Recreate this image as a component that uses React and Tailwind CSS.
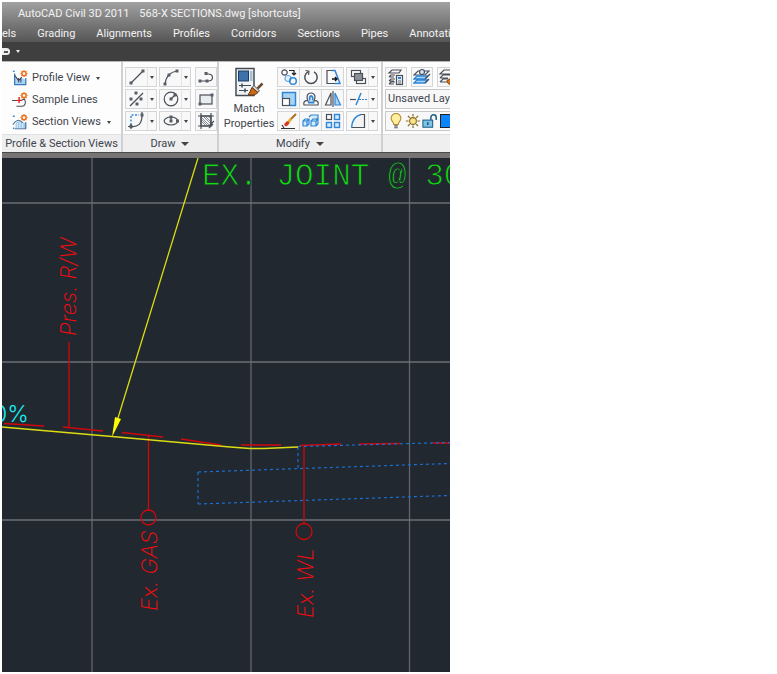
import React from "react";

const INK = "#4a4f58";
const BLUE = "#2f86d6";
const SKY = "#a9d3f2";

function Glyph({ children, size = "size-[18px]", box = 18 }) {
  return (
    <svg
      className={`${size} shrink-0`}
      viewBox={`0 0 ${box} ${box}`}
      fill="none"
      stroke={INK}
      strokeWidth="1.2"
      aria-hidden="true"
    >
      {children}
    </svg>
  );
}

function Node({ x, y }) {
  return <rect x={x - 1} y={y - 1} width="2" height="2" fill="#7b818b" stroke={INK} strokeWidth="0.9" />;
}

function Gear() {
  return (
    <g stroke="#f0701a">
      <circle cx="13.500" cy="4" r="2.400" fill="#fff" strokeWidth="1.700" />
      <path d="M13.500 0v1.200M13.500 6.800v1.200M9.500 4h1.200M16.300 4h1.200M10.700 1.200l.9.900M15.400 5.900l.9.900M16.300 1.200l-.9.900M11.600 5.900l-.9.900" strokeWidth="1.200" />
    </g>
  );
}

const icons = {
  profile: (
    <>
      <path d="M3.500 16V7l4 5 2.500-4 5 3v5z" fill="#a9d3f4" stroke="none" />
      <path d="M3 4v12.500h12.500V9" stroke="#3479bd" strokeWidth="1.400" />
      <path d="M3 6l4.500 6L11 8M7.500 9v5M10 10v4" stroke="#3c4654" />
      <path d="M1 1.500h2" stroke={BLUE} strokeWidth="1.600" />
      <Gear />
    </>
  ),
  sample: (
    <>
      <path d="M0 9.500h9c2 0 4-1 5-2M14 8c2 4 1 8-3 8H5" />
      <path d="M8 5.500v7" stroke="#e02020" strokeWidth="1.600" />
      <path d="M5 9.500h6" stroke="#e02020" />
      <Gear />
    </>
  ),
  section: (
    <>
      <path d="M4 16v-5c2-3 6-4 8-2l4 2v5z" fill="#9cc9ef" stroke="none" />
      <path d="M1 12c3-5 7-7 11-2M3 16.500h13M15.500 9v7" stroke="#4b6f95" />
      <path d="M6 10v6M9 9v7M12 10v6" stroke="#e3f1fb" />
      <path d="M1 2.500h2M1 16h1.500" stroke={BLUE} strokeWidth="1.600" />
      <Gear />
    </>
  ),
  line: (
    <>
      <path d="M3 15L15 3" />
      <Node x={3} y={15} />
      <Node x={15} y={3} />
    </>
  ),
  points: (
    <>
      <path d="M2 16L15 3" />
      <Node x={3} y={9} />
      <Node x={8} y={3} />
      <Node x={13} y={9} />
      <Node x={9} y={14} />
    </>
  ),
  fillet: (
    <>
      <path d="M3 13V3h8" stroke={BLUE} strokeDasharray="2 1.500" strokeWidth="1.400" />
      <path d="M3 14.500c7 1 11-3 11-11M0 14.500h6M14 0v6M3 12v5" />
      <Node x={3} y={14.5} />
      <Node x={14} y={3} />
    </>
  ),
  arc: (
    <>
      <path d="M3 16C4 8 8 4 15 3" />
      <Node x={3} y={16} />
      <Node x={7} y={7} />
      <Node x={15} y={3} />
    </>
  ),
  circle: (
    <>
      <circle cx="9" cy="9" r="6.800" />
      <path d="M9 9l4-4" />
      <Node x={9} y={9} />
      <Node x={13} y={5} />
    </>
  ),
  ellipse: (
    <>
      <ellipse cx="9" cy="9" rx="6.800" ry="4" />
      <path d="M9 5v4" />
      <Node x={9} y={9} />
      <Node x={9} y={5} />
      <Node x={15.5} y={9} />
    </>
  ),
  polyline: (
    <>
      <path d="M3 13h8c6 0 6-7 0-7H9" />
      <Node x={3} y={13} />
      <Node x={10} y={13} />
      <Node x={9} y={5.5} />
    </>
  ),
  rectangle: (
    <>
      <rect x="3" y="5" width="12" height="9" fill="#e9ecef" />
      <Node x={3} y={14} />
      <Node x={15} y={5} />
    </>
  ),
  hatch: (
    <>
      <rect x="4" y="4" width="10" height="10" fill="#eef0f2" />
      <path d="M4 5l9 9M4 9l5 5M8 4l6 6M11 4l3 3M4 7l7 7M6 4l8 8" strokeWidth=".6" />
      <path d="M4 1v16M14 1v12M1 4h16M1 14h11l5-5M12 16l4-4" />
    </>
  ),
  copy: (
    <>
      <circle cx="4.500" cy="4.500" r="2.700" />
      <circle cx="8" cy="10.500" r="3" stroke="#6aa9e0" fill="#e4f1fb" />
      <circle cx="13" cy="13" r="3.300" stroke={BLUE} strokeWidth="1.500" />
      <path d="M9 2.500h5v4M12 5l2 2 2-2" stroke="#222" />
    </>
  ),
  rotate: (
    <>
      <path d="M6 3.800A6.200 6.200 0 1 0 12 3.800" strokeWidth="1.500" />
      <path d="M3.500 2.500l3.500.7-.5 3.600" />
    </>
  ),
  stretch: (
    <>
      <path d="M9 2.500H3v13h8" />
      <path d="M8 2.500h3l5 13h-5" stroke={BLUE} strokeWidth="1.500" />
      <path d="M8 11h5M11 9l2 2-2 2" stroke="#111" strokeWidth="1.400" />
    </>
  ),
  scale: (
    <>
      <path d="M2.500 8V2.500h13v13H10" fill={SKY} stroke={BLUE} strokeWidth="1.500" />
      <rect x="2.500" y="8.500" width="7" height="7" fill="#fff" />
    </>
  ),
  offset: (
    <>
      <path d="M2 15h14c1-3-1-5-4-4 2-4 1-8-3-8s-5 4-3 8c-3-1-5 1-4 4z" />
      <path d="M6 12.500h6.500M8 10.500c-2-6 4-6 2.500 0" stroke={BLUE} strokeWidth="1.800" />
    </>
  ),
  mirror: (
    <>
      <path d="M7 3v12H1.500z" />
      <path d="M9 1v16" />
      <path d="M11 3v12h5.500z" fill={SKY} stroke={BLUE} />
    </>
  ),
  erase: (
    <>
      <path d="M16 2l-6 6" stroke="#b06a22" strokeWidth="2" />
      <path d="M11 7l-3 3.500" stroke="#e7b23a" strokeWidth="3" />
      <path d="M7.500 11L6 12.500" stroke="#d9371f" strokeWidth="3.500" strokeLinecap="round" />
      <path d="M1 16.500h14M2 13l2 3" stroke="#333" />
    </>
  ),
  explode: (
    <g stroke={BLUE} fill="#d5eafa">
      <path d="M1 9l2-2h4v5l-2 2H1zM1 9h4v5M5 9l2-2" />
      <path d="M7 5l2-2h7v3l-2 2M9 9l2-2h5v5l-2 2H9zM9 9h5v5M14 9l2-2" />
    </g>
  ),
  array: (
    <>
      <rect x="2.500" y="2.500" width="5" height="5" />
      <g stroke={BLUE} fill="#d5eafa" strokeWidth="1.400">
        <rect x="10.500" y="2.500" width="5" height="5" />
        <rect x="2.500" y="10.500" width="5" height="5" />
        <rect x="10.500" y="10.500" width="5" height="5" />
      </g>
    </>
  ),
  order: (
    <>
      <rect x="2.500" y="2.500" width="9" height="6" fill="#fff" />
      <rect x="7.500" y="10.500" width="9" height="5" fill="#fff" />
      <rect x="5.500" y="5.500" width="8" height="7" fill="#8b9098" />
    </>
  ),
  trim: (
    <>
      <path d="M7 15l5-12" stroke={BLUE} strokeWidth="1.500" />
      <path d="M1 9.500h6" />
      <path d="M10 9.500h8" strokeDasharray="2 1" stroke={BLUE} />
    </>
  ),
  chamfer: (
    <>
      <path d="M2.500 15.500h13v-13H11" fill="#f1f3f5" />
      <path d="M2.500 15.500C3 8 6 4 12 2.500" stroke={BLUE} strokeWidth="1.500" />
    </>
  ),
  layerProps: (
    <>
      <path d="M2 5l3-3h9l-2 3zM2 9l2-2h4M2 13l2-2h4M2 16l2-2h4M2 9h5M2 13h5M2 16h5" />
      <rect x="9.500" y="7.500" width="6" height="9" fill="#e8f1fa" />
      <path d="M11 10h3" stroke={BLUE} strokeWidth="2" />
      <path d="M11 13h3M11 15h3" strokeWidth=".8" />
    </>
  ),
  layerCurrent: (
    <>
      <path d="M1 7l4-4h11l-4 4z" fill="#fff" />
      <path d="M1 11l3-3h11l-3 3zM1 15l3-3h11l-3 3z" fill={SKY} stroke={BLUE} strokeWidth="1.300" />
      <circle cx="9" cy="4" r="2.500" fill="#cfe5f8" />
      <path d="M12 11l5-5M12 15l4-4" />
    </>
  ),
  layerMatch: (
    <>
      <path d="M1 6l4-4h11l-4 4zM1 10l3-3h11M1 14l3-3h5M1 10h8M1 14h7" />
      <path d="M8 13l4-3 4 3-3 3c-2 1-4 0-5-3z" fill="#d9791f" stroke="#a1520e" />
    </>
  ),
};

function Caret({ tone = "border-t-[#444]", wide = false }) {
  return (
    <span
      aria-hidden="true"
      className={`block border-x-transparent ${tone} ${wide ? "border-x-4 border-t-4" : "border-x-2 border-t-3"}`}
    />
  );
}

function ToolButton({ icon, label, width = "w-[22px]" }) {
  return (
    <button
      type="button"
      aria-label={label}
      className={`flex h-5 shrink-0 items-center justify-center border border-[#d3d5d7] bg-[#f8f8f9] ${width}`}
    >
      <Glyph>{icons[icon]}</Glyph>
    </button>
  );
}

function SplitButton({ icon, label }) {
  return (
    <div className="flex h-5 w-8 shrink-0 border border-[#d3d5d7] bg-[#f8f8f9]">
      <button type="button" aria-label={label} className="flex w-[21px] items-center justify-center">
        <Glyph>{icons[icon]}</Glyph>
      </button>
      <button type="button" aria-label={`${label} options`} className="flex flex-1 items-center justify-center border-l border-[#e2e3e5]">
        <Caret />
      </button>
    </div>
  );
}

function Panel({ title, caret, className, children }) {
  return (
    <section className={`flex flex-col border-r-2 border-[#cfd0d2] bg-[#fdfdfd] ${className}`}>
      <div className="flex h-[72px] items-start pt-[5px]">{children}</div>
      <h2 className="flex h-[18px] items-center justify-center gap-1.5 border-t border-[#e0e1e3] bg-[#efeff0] whitespace-nowrap">
        {title}
        {caret && <Caret wide />}
      </h2>
    </section>
  );
}

const tabs = ["els", "Grading", "Alignments", "Profiles", "Corridors", "Sections", "Pipes", "Annotation"];

const viewTools = [
  { icon: "profile", label: "Profile View", menu: true },
  { icon: "sample", label: "Sample Lines", menu: false },
  { icon: "section", label: "Section Views", menu: true },
];

const drawRows = [
  [["line", "Line"], ["arc", "Arc"], ["polyline", "Polyline"]],
  [["points", "Points"], ["circle", "Circle"], ["rectangle", "Rectangle"]],
  [["fillet", "Curve"], ["ellipse", "Ellipse"], ["hatch", "Hatch"]],
];

const modifyRows = [
  [["copy", "Copy"], ["rotate", "Rotate"], ["stretch", "Stretch"], ["order", "Draw order"]],
  [["scale", "Scale"], ["offset", "Offset"], ["mirror", "Mirror"], ["trim", "Trim"]],
  [["erase", "Erase"], ["explode", "Explode"], ["array", "Array"], ["chamfer", "Fillet"]],
];

function MatchIcon() {
  return (
    <svg className="h-[30px] w-[30px]" viewBox="0 0 30 30" fill="none" aria-hidden="true">
      <rect x="2" y="1.500" width="18" height="27" fill="#f0f3f6" stroke="#444b55" strokeWidth="1.500" />
      <rect x="4.500" y="4" width="10" height="10" fill="#3d72aa" stroke="#1c3d62" />
      <path d="M16 4h2.500v10H16z" fill="#a9bdd1" />
      <path d="M5 18.500h12M5 23.500h9" stroke="#444b55" strokeWidth="1.200" />
      <path d="M8 16.500v4M11 21.500v4" stroke="#444b55" strokeWidth="1.500" />
      <path d="M28.500 16.500l-5 5" stroke="#6e4a2c" strokeWidth="2.500" />
      <path d="M20 18.500l5.500 5.500-2 1.500-5.500-5z" fill="#d5d9dd" stroke="#555" />
      <path d="M18 20.500l6 5c-3 3-6 3-10 2 2-1 2-4 4-7z" fill="#c8681b" stroke="#6c3305" />
    </svg>
  );
}

function Ribbon() {
  return (
    <div className="flex shrink-0 overflow-hidden border-t border-[#b8b8b8] bg-white text-[11px] leading-4 text-[#3f454e]">
      <Panel title="Profile & Section Views" className="w-[121px] shrink-0">
        <ul className="flex flex-col gap-1.5 pt-[3px] pl-2.5">
          {viewTools.map((tool) => (
            <li key={tool.icon}>
              <button type="button" className="flex h-4 items-center gap-1 whitespace-nowrap">
                <Glyph size="size-4">{icons[tool.icon]}</Glyph>
                <span className="pr-0.5">{tool.label}</span>
                {tool.menu && <Caret />}
              </button>
            </li>
          ))}
        </ul>
      </Panel>

      <Panel title="Draw" caret className="w-24 shrink-0">
        <div className="flex flex-col gap-0.5 pl-0.5">
          {drawRows.map(([a, b, c]) => (
            <div key={a[0]} className="flex">
              <SplitButton icon={a[0]} label={a[1]} />
              <span className="w-0.5" />
              <SplitButton icon={b[0]} label={b[1]} />
              <span className="w-1" />
              <ToolButton icon={c[0]} label={c[1]} />
            </div>
          ))}
        </div>
      </Panel>

      <Panel title="Modify" caret className="w-[164px] shrink-0">
        <button type="button" className="flex w-[58px] shrink-0 flex-col items-center pl-0.5 text-center leading-[15px]">
          <MatchIcon />
          <span className="pt-1">
            Match
            <br />
            Properties
          </span>
        </button>
        <div className="flex flex-col gap-0.5">
          {modifyRows.map(([a, b, c, d]) => (
            <div key={a[0]} className="flex">
              <div className="flex -space-x-px">
                <ToolButton icon={a[0]} label={a[1]} width="w-[23px]" />
                <ToolButton icon={b[0]} label={b[1]} width="w-[23px]" />
                <ToolButton icon={c[0]} label={c[1]} width="w-[23px]" />
              </div>
              <span className="w-0.5" />
              <SplitButton icon={d[0]} label={d[1]} />
            </div>
          ))}
        </div>
      </Panel>

      <Panel title="" className="min-w-[200px] flex-1">
        <div className="flex w-full flex-col gap-0.5 pl-0.5">
          <div className="flex gap-1">
            <ToolButton icon="layerProps" label="Layer properties" />
            <ToolButton icon="layerCurrent" label="Make current" />
            <ToolButton icon="layerMatch" label="Match layer" />
          </div>
          <select aria-label="Layer state" className="h-5 w-40 appearance-none border border-[#c6c8ca] bg-[#f8f8f9] px-0.5">
            <option>Unsaved Layer State</option>
          </select>
          <button type="button" aria-label="Current layer" className="flex h-5 w-40 items-center gap-px border border-[#c6c8ca] bg-[#f8f8f9] pl-0.5">
            <Glyph size="size-4">
              <path d="M6.500 13c0-3-3-3.500-3-7a5.500 5.500 0 0 1 11 0c0 3.500-3 4-3 7z" fill="#fdeea0" stroke="#b28a2c" />
              <path d="M7 14.500h4M7 16.500h4" stroke="#555" />
            </Glyph>
            <Glyph size="size-4">
              <circle cx="9" cy="9" r="3.800" fill="#fbe389" stroke="#8b6c22" />
              <path d="M9 1v3M9 14v3M1 9h3M14 9h3M3.300 3.300l2 2M12.700 12.700l2 2M14.700 3.300l-2 2M5.300 12.700l-2 2" stroke="#8b6c22" strokeWidth="1.400" />
            </Glyph>
            <Glyph size="size-4">
              <rect x="1" y="8" width="11" height="8" fill="#7cc3e8" stroke="#1e5f86" />
              <path d="M10 8V5c0-4 6-4 6 0v3" stroke="#1e5f86" strokeWidth="1.700" />
              <path d="M6.500 10.500v3" stroke="#1e3f56" strokeWidth="1.500" />
            </Glyph>
            <span className="ml-px size-3.5 border border-[#222] bg-[#0a84ff]" />
          </button>
        </div>
      </Panel>
    </div>
  );
}

const redDashes = "M2 265.500L42 268M61 269L101 273M120 274.500L161 279M179 281L219 287M239 287H279M298 287.500L339 286M357 286L398 285.500M431 285H900";

function Drawing() {
  return (
    <div className="min-h-0 flex-1 overflow-hidden bg-[#212830]">
      <svg className="h-full w-full" fill="none" role="img" aria-label="Cross section drawing">
        <g stroke="#62666b" strokeWidth="1.300">
          <path d="M90 0V2000M249 0V2000M407.500 0V2000" />
          <path d="M0 45H2000M0 204H2000M0 362H2000" stroke="#6c6f73" />
        </g>
        <g stroke="#d0080c" strokeWidth="1.300">
          <path d={redDashes} />
          <path d="M67 184V269M146.500 277V352M302 288V365.500" />
          <circle cx="146.500" cy="359.500" r="7.500" />
          <circle cx="302" cy="373.500" r="8" />
        </g>
        <g stroke="#1b6fd0" strokeWidth="1.200" strokeDasharray="3 3">
          <path d="M296 288.500L448 284.500M196 314L448 305.500M196 346L448 337.500" />
          <path d="M196 314V346M296 289V311" />
        </g>
        <path d="M196 0L116 260M0 269L110 278.500L228 289L248 290.500H262L296 289" stroke="#dcdc12" strokeWidth="1.300" />
        <path d="M113 259L119 261L110 279z" fill="#ffff00" />

        <text
          x="200"
          y="27"
          className="font-['Liberation_Mono',monospace] text-[31px] whitespace-pre"
          fill="#10dc10"
          stroke="#212830"
          strokeWidth="0.900"
        >
          EX. JOINT @ 30
        </text>
        <g fill="#ff080c" className="font-['Inter',sans-serif] text-[22px] font-extralight whitespace-pre italic">
          <text transform="translate(74 178) rotate(-90)">{"Pres.  R/W"}</text>
          <text transform="translate(155 453) rotate(-90)">Ex. GAS</text>
          <text transform="translate(311 460) rotate(-90)">{"Ex.  WL"}</text>
        </g>
        <text x="-9" y="264" fill="#16f0f0" className="font-['Inter',sans-serif] text-[23px] font-light">
          0%
        </text>
      </svg>
    </div>
  );
}

export default function App() {
  return (
    <div className="h-screen bg-white p-0.5 font-['Roboto','Noto_Sans',sans-serif]">
      <main className="flex h-full w-[58%] flex-col overflow-hidden">
        <header className="shrink-0 overflow-hidden bg-linear-to-b from-[#a2a2a2] to-[#565656] text-[11px] leading-4 whitespace-nowrap text-[#f2f2f2]">
          <h1 className="flex h-6 items-center gap-2.5 pl-4">
            <span>AutoCAD Civil 3D 2011</span>
            <span>568-X SECTIONS.dwg [shortcuts]</span>
          </h1>
          <nav className="flex h-4 gap-[21px]">
            {tabs.map((tab) => (
              <button key={tab} type="button">
                {tab}
              </button>
            ))}
          </nav>
        </header>
        <div className="flex h-[19px] shrink-0 items-center gap-1.5 bg-[#3f3f3f]">
          <span className="flex h-[7px] w-2 items-center justify-center rounded-r-sm bg-[#eeeeee]">
            <span className="h-0.5 w-1 bg-[#555]" />
          </span>
          <Caret tone="border-t-[#e8e8e8]" />
        </div>
        <Ribbon />
        <div className="h-1.5 shrink-0 border-t border-[#4a4a4a] bg-[#777573]" />
        <Drawing />
      </main>
    </div>
  );
}
